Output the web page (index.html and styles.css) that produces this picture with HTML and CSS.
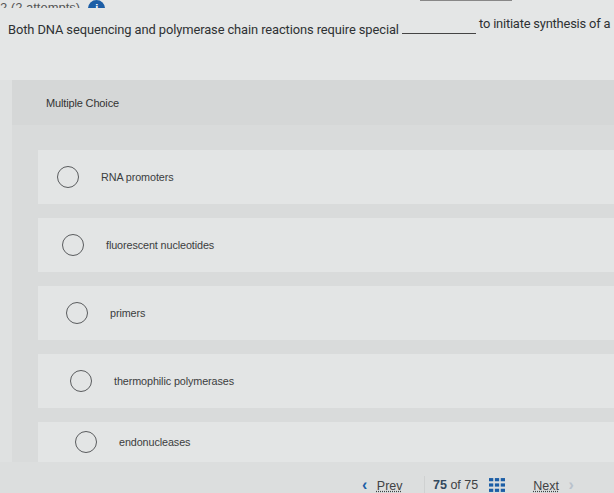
FILE: index.html
```html
<!DOCTYPE html>
<html lang="en">
<head>
    <meta charset="UTF-8">
    <meta name="viewport" content="width=device-width, initial-scale=1.0">
    <title>Multiple Choice</title>
    <link rel="stylesheet" href="styles.css">
</head>
<body>
    <div class="attempts">
        <span class="attempts-text">2 (2 attempts)</span>
        <span class="info-icon">i</span>
        <span class="top-rule"></span>
    </div>

    <p class="question">
        Both DNA sequencing and polymerase chain reactions require special
        <span class="blank"></span>
        <span class="tail">to initiate synthesis of a</span>
    </p>

    <div class="panel">
        <div class="panel-head">Multiple Choice</div>
        <div class="choices">
            <label class="choice"><span class="radio"></span>RNA promoters</label>
            <label class="choice"><span class="radio"></span>fluorescent nucleotides</label>
            <label class="choice"><span class="radio"></span>primers</label>
            <label class="choice"><span class="radio"></span>thermophilic polymerases</label>
            <label class="choice"><span class="radio"></span>endonucleases</label>
        </div>
    </div>

    <nav class="pager">
        <a class="prev"><span class="chev">&lsaquo;</span> <u>Prev</u></a>
        <span class="count"><b>75</b> of 75</span>
        <svg class="grid" width="16" height="14" viewBox="0 0 15 13">
            <rect x="0" y="0" width="4" height="3"/><rect x="5.5" y="0" width="4" height="3"/><rect x="11" y="0" width="4" height="3"/>
            <rect x="0" y="5" width="4" height="3"/><rect x="5.5" y="5" width="4" height="3"/><rect x="11" y="5" width="4" height="3"/>
            <rect x="0" y="10" width="4" height="3"/><rect x="5.5" y="10" width="4" height="3"/><rect x="11" y="10" width="4" height="3"/>
        </svg>
        <a class="next"><u>Next</u> <span class="chev">&rsaquo;</span></a>
    </nav>
</body>
</html>
```

FILE: styles.css
```css
body {
    margin: 0;
    background-color: #dfe1e1;
    color: #3a3c3d;
    font-family: "Liberation Sans", Arial, sans-serif;
    overflow: hidden;
    height: 493px;
}

.attempts {
    height: 8px;
    overflow: hidden;
    display: flex;
    align-items: flex-end;
    background-color: #e4e6e6;
    position: relative;
}

.attempts-text {
    font-size: 13px;
    line-height: 13px;
    margin-bottom: -6px;
    color: #555;
}

.info-icon {
    width: 17px;
    height: 17px;
    border-radius: 50%;
    background-color: #1c5ea6;
    color: #fff;
    font-size: 11px;
    font-weight: bold;
    text-align: center;
    line-height: 17px;
    margin: 0 0 -9px 8px;
}

.top-rule {
    position: absolute;
    left: 420px;
    top: 0;
    width: 92px;
    border-top: 1px solid #888;
}

.question {
    margin: 0;
    padding: 14px 0 26px 8px;
    font-family: Roboto, "Liberation Sans", sans-serif;
    font-size: 12.9px;
    letter-spacing: -0.1px;
    color: #2e3133;
    white-space: nowrap;
    background-color: #e4e6e6;
    height: 32px;
    box-sizing: content-box;
}

.blank {
    display: inline-block;
    width: 74px;
    border-bottom: 1px solid #444;
}

.tail {
    position: relative;
    top: -6px;
    letter-spacing: -0.2px;
}

.panel {
    margin-left: 12px;
}

.panel-head {
    background-color: #d5d7d7;
    height: 45px;
    padding-left: 34px;
    display: flex;
    align-items: center;
    font-size: 11px;
    letter-spacing: -0.15px;
    color: #333;
}

.choices {
    background-color: #d9dbdb;
    padding: 25px 0 0 26px;
}

.choice {
    display: flex;
    align-items: center;
    gap: 22px;
    height: 54px;
    margin-bottom: 14px;
    padding-left: 19px;
    background-color: #e3e5e5;
    font-size: 10.8px;
    letter-spacing: -0.1px;
    color: #3b3d3e;
}

.choice:nth-child(2) { padding-left: 24px; }
.choice:nth-child(3) { padding-left: 28px; }
.choice:nth-child(4) { padding-left: 32px; }
.choice:nth-child(5) { padding-left: 37px; margin-bottom: 0; height: 40px; }

.radio {
    width: 20px;
    height: 20px;
    border: 1.5px solid #5a5c5e;
    border-radius: 50%;
    flex-shrink: 0;
}

.pager {
    display: flex;
    align-items: center;
    height: 36px;
    padding: 10px 0 0 360px;
    box-sizing: border-box;
    background-color: #dcdede;
    font-size: 12.5px;
    color: #3f4244;
}

.prev {
    width: 52px;
    padding-right: 12px;
    border-right: 1px solid #cfd1d1;
}

.prev u, .next u {
    text-decoration: underline dotted;
}

.chev {
    color: #1c5ea6;
    font-weight: bold;
    font-size: 16px;
    margin: 0 6px 0 2px;
}

.next .chev {
    color: #b9c2cc;
    margin: 0 0 0 6px;
}

.count {
    margin-left: 8px;
}

.count b {
    color: #33495e;
}

.grid {
    fill: #1c5ea6;
    margin-left: 11px;
}

.next {
    margin-left: 28px;
}
```
